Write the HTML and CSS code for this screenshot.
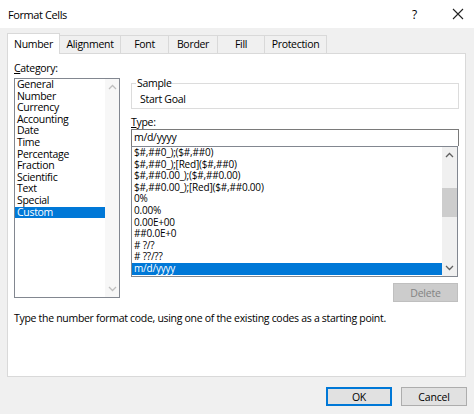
FILE: index.html
```html
<!DOCTYPE html>
<html lang="en">
<head>
    <meta charset="UTF-8">
    <meta name="viewport" content="width=device-width, initial-scale=1.0">
    <title>Format Cells</title>
    <link rel="stylesheet" href="styles.css">
</head>
<body>

    <div class="titlebar">
        <span class="title">Format Cells</span>
        <span class="help">?</span>
        <span class="close">
            <svg width="12" height="12" viewBox="0 0 12 12"><path d="M1 1L11 11M11 1L1 11" stroke="#222" stroke-width="1.1" fill="none"/></svg>
        </span>
    </div>

    <div class="tabs">
        <div class="tab active" style="width:53px">Number</div>
        <div class="tab" style="width:61px">Alignment</div>
        <div class="tab" style="width:48px">Font</div>
        <div class="tab" style="width:49px">Border</div>
        <div class="tab" style="width:47px">Fill</div>
        <div class="tab" style="width:62px">Protection</div>
    </div>

    <div class="panel">
        <div class="columns">
            <div class="left">
                <div class="label"><u>C</u>ategory:</div>
                <div class="listbox category">
                    <ul class="items">
                        <li>General</li>
                        <li>Number</li>
                        <li>Currency</li>
                        <li>Accounting</li>
                        <li>Date</li>
                        <li>Time</li>
                        <li>Percentage</li>
                        <li>Fraction</li>
                        <li>Scientific</li>
                        <li>Text</li>
                        <li>Special</li>
                        <li class="selected">Custom</li>
                    </ul>
                    <div class="scrollbar disabled">
                        <svg class="arrow" width="9" height="6" viewBox="0 0 9 6"><path d="M1 5L4.5 1.5L8 5" stroke="currentColor" stroke-width="1.3" fill="none"/></svg>
                        <div class="track"></div>
                        <svg class="arrow" width="9" height="6" viewBox="0 0 9 6"><path d="M1 1L4.5 4.5L8 1" stroke="currentColor" stroke-width="1.3" fill="none"/></svg>
                    </div>
                </div>
            </div>

            <div class="right">
                <fieldset class="sample">
                    <legend>Sample</legend>
                    <div class="sample-value">Start Goal</div>
                </fieldset>

                <div class="label type-label"><u>T</u>ype:</div>
                <div class="input">m/d/yyyy</div>

                <div class="listbox formats">
                    <ul class="items">
                        <li>$#,##0_);($#,##0)</li>
                        <li>$#,##0_);[Red]($#,##0)</li>
                        <li>$#,##0.00_);($#,##0.00)</li>
                        <li>$#,##0.00_);[Red]($#,##0.00)</li>
                        <li>0%</li>
                        <li>0.00%</li>
                        <li>0.00E+00</li>
                        <li>##0.0E+0</li>
                        <li># ?/?</li>
                        <li># ??/??</li>
                        <li class="selected">m/d/yyyy</li>
                    </ul>
                    <div class="scrollbar">
                        <svg class="arrow" width="9" height="6" viewBox="0 0 9 6"><path d="M1 5L4.5 1.5L8 5" stroke="currentColor" stroke-width="1.3" fill="none"/></svg>
                        <div class="track"><div class="thumb"></div></div>
                        <svg class="arrow" width="9" height="6" viewBox="0 0 9 6"><path d="M1 1L4.5 4.5L8 1" stroke="currentColor" stroke-width="1.3" fill="none"/></svg>
                    </div>
                </div>

                <div class="delete-row">
                    <button class="btn disabled">Delete</button>
                </div>
            </div>
        </div>

        <p class="hint">Type the number format code, using one of the existing codes as a starting point.</p>
    </div>

    <div class="footer">
        <button class="btn default">OK</button>
        <button class="btn">Cancel</button>
    </div>

</body>
</html>
```

FILE: styles.css
```css
body {
    margin: 0;
    width: 474px;
    height: 414px;
    overflow: hidden;
    background-color: #f0f0f0;
    font-family: "Open Sans", "Noto Sans", sans-serif;
    font-size: 10.5px;
    letter-spacing: -0.3px;
    color: #000;
}

.titlebar {
    height: 28px;
    background-color: #fff;
    display: flex;
    align-items: center;
    padding-left: 8px;
}

.title {
    flex: 1;
    font-size: 11px;
    letter-spacing: -0.4px;
}

.help {
    width: 40px;
    font-size: 12px;
}

.close {
    width: 22px;
    display: flex;
}

/* tab strip */
.tabs {
    display: flex;
    align-items: flex-end;
    padding-left: 7px;
    margin-top: 5px;
    height: 20px;
}

.tab {
    box-sizing: border-box;
    height: 18px;
    line-height: 16px;
    text-align: center;
    border: 1px solid #d9d9d9;
    border-left: none;
    border-bottom: none;
    background-color: #f0f0f0;
}

.tab.active {
    position: relative;
    z-index: 1;
    height: 21px;
    margin-bottom: -1px;
    line-height: 21px;
    background-color: #fff;
    border-left: 1px solid #d9d9d9;
}

.panel {
    box-sizing: border-box;
    height: 324px;
    margin: 0 8px 0 7px;
    padding: 7px 6px 0 6px;
    background-color: #fff;
    border: 1px solid #d9d9d9;
}

.columns {
    display: flex;
    gap: 11px;
}

.left {
    width: 106px;
}

.right {
    width: 328px;
    padding-top: 15px;
}

.label {
    line-height: 15px;
}

/* list boxes */
.listbox {
    box-sizing: border-box;
    display: flex;
    border: 1px solid #828790;
    background-color: #fff;
}

.listbox.category {
    margin-top: 2px;
    height: 220px;
}

.listbox.formats {
    width: 327px;
    height: 131px;
}

.items {
    flex: 1;
    margin: 0;
    padding: 0;
    list-style: none;
}

.items li {
    height: 11.6px;
    line-height: 11.6px;
    padding-left: 2px;
    white-space: nowrap;
}

.formats .items li {
    font-size: 10px;
    letter-spacing: -0.2px;
}

.items li.selected {
    background-color: #0078d7;
    color: #fff;
}

.scrollbar {
    width: 15px;
    display: flex;
    flex-direction: column;
    align-items: center;
    background-color: #f0f0f0;
    color: #606060;
}

.scrollbar.disabled {
    width: 14px;
    background-color: #f7f7f7;
    color: #bfbfbf;
}

.arrow {
    margin: 5px 0;
}

.track {
    flex: 1;
    width: 100%;
    padding-top: 25px;
}

.thumb {
    height: 29px;
    background-color: #cdcdcd;
}

/* sample box */
.sample {
    margin: 0;
    padding: 0 4px 2px 4px;
    border: 1px solid #dcdcdc;
}

.sample legend {
    padding: 0 1px;
    line-height: 14px;
}

.sample-value {
    margin-top: 2px;
    margin-left: 4px;
    line-height: 14px;
}

.type-label {
    margin-top: 6px;
    line-height: 14px;
}

.input {
    box-sizing: border-box;
    height: 17px;
    line-height: 15px;
    padding-left: 2px;
    border: 1px solid #7a7a7a;
    border-bottom: none;
}

.delete-row {
    display: flex;
    justify-content: flex-end;
    padding-right: 1px;
    margin-top: 6px;
}

/* buttons */
.btn {
    box-sizing: border-box;
    width: 66px;
    height: 19px;
    padding: 0;
    font-family: "Open Sans", "Noto Sans", sans-serif;
    font-size: 10.5px;
    letter-spacing: -0.2px;
    background-color: #e1e1e1;
    border: 1px solid #adadad;
    color: #000;
}

.btn.disabled {
    width: 65px;
    background-color: #cccccc;
    border-color: #bfbfbf;
    color: #838383;
}

.btn.default {
    border: 2px solid #0078d7;
}

.hint {
    margin: 9px 0 0 0;
    line-height: 14px;
}

.footer {
    display: flex;
    justify-content: flex-end;
    gap: 9px;
    padding-right: 7px;
    margin-top: 10px;
}
```
